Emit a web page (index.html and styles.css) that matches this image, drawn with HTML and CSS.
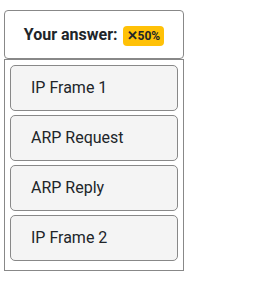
FILE: index.html
```html
<!DOCTYPE html>
<html><head>
<title>Your answer</title>
<link rel="stylesheet" href="styles.css">
</head><body>

<div class="quiz">
  <div class="result">
    <span class="label">Your answer:</span>
    <span class="badge"><span class="mark">&#x2715;</span>50%</span>
  </div>
  <div class="choices">
    <div class="choice">IP Frame 1</div>
    <div class="choice">ARP Request</div>
    <div class="choice">ARP Reply</div>
    <div class="choice">IP Frame 2</div>
  </div>
</div>

</body></html>
```

FILE: styles.css
```css
body {
  margin: 10px 0 0 4px;
  font-family: Roboto, "Liberation Sans", sans-serif;
  color: #212529;
  background: #fff;
  }
.quiz {
  width: 180px;
  }
.result {
  display: flex;
  justify-content: center;
  align-items: center;
  gap: 5px;
  height: 47px;
  border: 1px solid #888;
  border-radius: 4px;
  }
.label {
  font-size: 16px;
  font-weight: bold;
  }
.badge {
  display: inline-block;
  background-color: #ffc107;
  font-size: 12px;
  font-weight: bold;
  line-height: 1;
  padding: 3.5px 4px;
  border-radius: 4px;
  margin-top: 2px;
  }
.mark {
  font-size: 13px;
  }
.choices {
  border: 1px solid #888;
  padding: 5px;
  }
.choice {
  background-color: #f4f4f4;
  border: 1px solid #888;
  border-radius: 5px;
  margin-bottom: 4px;
  padding: 10px 20px;
  font-size: 16px;
  line-height: 24px;
  }
```
